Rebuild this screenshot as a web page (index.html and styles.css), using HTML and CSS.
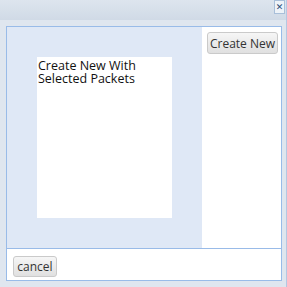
FILE: index.html
```html
<!DOCTYPE html>
<html lang="en">
<head>
  <meta charset="UTF-8" />
  <title>Create New</title>
  <link rel="stylesheet" href="styles.css">
</head>
<body>
  <div class="window">
    <div class="window-header">
      <span class="close-btn">&#x2715;</span>
    </div>
    <div class="window-body">
      <div class="panel">
        <div class="panel-main">
          <div class="list-area">
            <div class="packet-box">Create New With Selected Packets</div>
          </div>
          <div class="side-col">
            <button class="btn btn-create">Create New</button>
          </div>
        </div>
        <div class="panel-footer">
          <button class="btn btn-small">cancel</button>
        </div>
      </div>
    </div>
  </div>
</body>
</html>
```

FILE: styles.css
```css
* {
  box-sizing: border-box;
}

body {
  margin: 0;
  padding: 0;
  font-family: "Open Sans", "Noto Sans", Arial, sans-serif;
  font-size: 12.5px;
  background: #dfe6ef;
  overflow: hidden;
}

.window {
  position: relative;
  width: 287px;
  height: 287px;
  border-right: 1px solid #b4c8e2;
  background: #dfe6ef;
}

.window-header {
  height: 20px;
  background: linear-gradient(to bottom, #dde5ee, #d0dae6);
}

.close-btn {
  position: absolute;
  top: 0;
  right: 1px;
  width: 11px;
  height: 14px;
  border: 1px solid #a9bfd9;
  background: #eef3f8;
  color: #2a4a78;
  font-size: 9px;
  line-height: 12px;
  text-align: center;
  font-family: "DejaVu Sans", sans-serif;
}

.window-body {
  padding: 6px 5px 0 6px;
}

.panel {
  width: 276px;
  border: 1px solid #99bbe8;
  background: #ffffff;
}

.panel-main {
  display: flex;
  height: 221px;
}

.list-area {
  width: 195px;
  background: #dfe8f6;
  padding: 30px 0 0 30px;
}

.packet-box {
  width: 135px;
  height: 161px;
  background: #ffffff;
  color: #111111;
  line-height: 13px;
  padding: 2px 30px 0 1px;
}

.side-col {
  flex: 1;
  padding: 5px 0 0 5px;
}

.btn {
  height: 22px;
  padding: 0 5px;
  font-family: "Open Sans", "Noto Sans", Arial, sans-serif;
  font-size: 12px;
  color: #333333;
  white-space: nowrap;
  background: linear-gradient(to bottom, #f6f6f6, #e0e0e0);
  border: 1px solid #cacaca;
  border-radius: 3px;
}

.btn-create {
  width: 71px;
  padding: 0;
}

.btn-small {
  width: 44px;
  height: 21px;
  padding: 0;
}

.panel-footer {
  height: 32px;
  border-top: 1px solid #99bbe8;
  padding: 7px 0 0 6px;
}
```
